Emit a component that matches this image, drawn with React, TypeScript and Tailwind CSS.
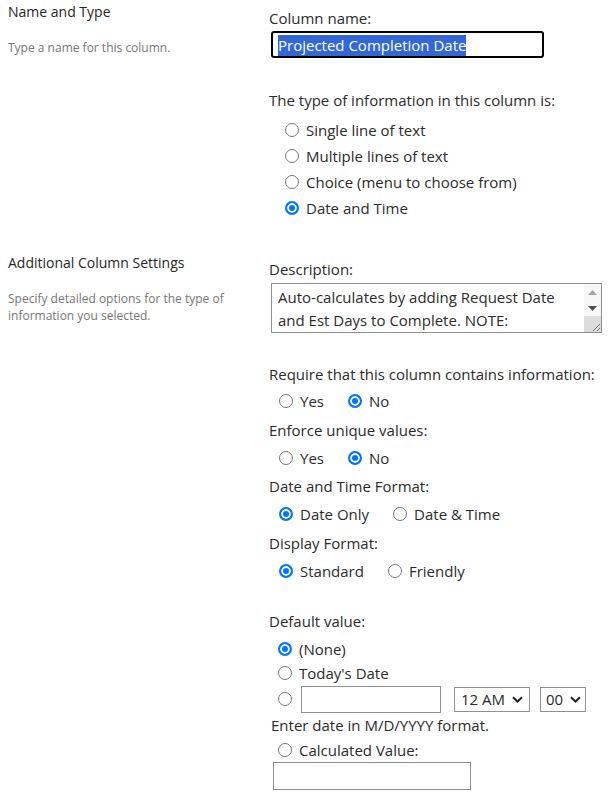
import React from "react";

const font = { fontFamily: '"Open Sans", "Noto Sans", sans-serif' };

const radioCls =
  "h-[14px] w-[14px] shrink-0 appearance-none rounded-full border border-[#767676] bg-white checked:border-2 checked:border-[#0075ff] checked:bg-[#0075ff] checked:shadow-[inset_0_0_0_2px_white]";

function Radio({ name, checked, label }: { name: string; checked?: boolean; label: string }) {
  return (
    <label className="flex items-center gap-[7px]">
      <input type="radio" name={name} defaultChecked={checked} className={radioCls} />
      <span>{label}</span>
    </label>
  );
}

function Chevron() {
  return (
    <svg width="11" height="7" viewBox="0 0 11 7" className="ml-[7px]">
      <path d="M1 1.2 L5.5 5.5 L10 1.2" fill="none" stroke="#222" strokeWidth="2" />
    </svg>
  );
}

function SectionHead({ title, desc }: { title: string; desc: string }) {
  return (
    <div className="w-[261px] shrink-0 pl-2 pr-6">
      <div className="text-[14px] leading-[20px] text-[#262626]">{title}</div>
      <div className="mt-[17px] text-[12px] leading-[17px] text-[#767676]">{desc}</div>
    </div>
  );
}

export default function App() {
  return (
    <div className="h-[797px] w-[613px] overflow-hidden bg-white text-[15px] text-[#2b2b2b]" style={font}>
      {/* Name and Type */}
      <div className="flex pt-[2px]">
        <SectionHead title="Name and Type" desc="Type a name for this column." />
        <div className="flex flex-col pl-2 pt-[6px]">
          <div className="leading-[20px]">Column name:</div>
          <div className="ml-[2px] mt-[3px] flex h-[27px] w-[273px] items-center rounded-[3px] border-2 border-black pl-[5px] pt-[2px]">
            <span className="bg-[#3367d6] leading-[21px] text-white">Projected Completion Date</span>
          </div>
          <div className="mt-[32px] leading-[20px]">The type of information in this column is:</div>
          <div className="ml-[16px] mt-[7px] flex flex-col">
            <div className="flex h-[26px] items-center"><Radio name="type" label="Single line of text" /></div>
            <div className="flex h-[26px] items-center"><Radio name="type" label="Multiple lines of text" /></div>
            <div className="flex h-[26px] items-center"><Radio name="type" label="Choice (menu to choose from)" /></div>
            <div className="flex h-[26px] items-center"><Radio name="type" checked label="Date and Time" /></div>
          </div>
        </div>
      </div>

      {/* Additional Column Settings */}
      <div className="mt-[32px] flex">
        <SectionHead
          title="Additional Column Settings"
          desc="Specify detailed options for the type of information you selected."
        />
        <div className="flex flex-col pl-2 pt-[6px]">
          <div className="leading-[20px]">Description:</div>
          <div className="ml-[2px] mt-[4px] flex h-[50px] w-[331px] border border-[#8f8f8f]">
            <textarea
              readOnly
              className="flex-1 resize-none overflow-hidden pl-[6px] pt-[2px] leading-[23px] outline-none"
              defaultValue={"Auto-calculates by adding Request Date and Est Days to Complete. NOTE:"}
            />
            <div className="flex w-[17px] flex-col bg-[#f7f7f7]">
              <div className="flex h-[16px] items-center justify-center">
                <svg width="9" height="5" viewBox="0 0 9 5"><path d="M0 5 L4.5 0 L9 5 Z" fill="#a3a3a3" /></svg>
              </div>
              <div className="flex h-[16px] items-center justify-center">
                <svg width="9" height="5" viewBox="0 0 9 5"><path d="M0 0 L4.5 5 L9 0 Z" fill="#505050" /></svg>
              </div>
              <div className="flex flex-1 items-end justify-end bg-[#dcdcdc]">
                <svg width="10" height="10" viewBox="0 0 10 10">
                  <path d="M9 2 L2 9 M9 6 L6 9" stroke="#777" strokeWidth="1" />
                </svg>
              </div>
            </div>
          </div>

          <div className="mt-[31px] leading-[20px]">Require that this column contains information:</div>
          <div className="ml-[10px] mt-[3px] flex h-[28px] items-center gap-[24px]">
            <Radio name="req" label="Yes" />
            <Radio name="req" checked label="No" />
          </div>
          <div className="mt-[5px] leading-[20px]">Enforce unique values:</div>
          <div className="ml-[10px] mt-[4px] flex h-[28px] items-center gap-[24px]">
            <Radio name="uniq" label="Yes" />
            <Radio name="uniq" checked label="No" />
          </div>
          <div className="mt-[4px] leading-[20px]">Date and Time Format:</div>
          <div className="ml-[10px] mt-[4px] flex h-[28px] items-center gap-[24px]">
            <Radio name="dtf" checked label="Date Only" />
            <Radio name="dtf" label="Date & Time" />
          </div>
          <div className="mt-[5px] leading-[20px]">Display Format:</div>
          <div className="ml-[10px] mt-[4px] flex h-[28px] items-center gap-[24px]">
            <Radio name="disp" checked label="Standard" />
            <Radio name="disp" label="Friendly" />
          </div>

          <div className="mt-[26px] leading-[20px]">Default value:</div>
          <div className="ml-[9px] mt-[6px] flex flex-col">
            <div className="flex h-[24px] items-center"><Radio name="def" checked label="(None)" /></div>
            <div className="flex h-[24px] items-center"><Radio name="def" label="Today's Date" /></div>
            <div className="flex h-[28px] items-center">
              <input type="radio" name="def" className={radioCls} />
              <input type="text" className="ml-[9px] h-[27px] w-[140px] border border-[#8f8f8f]" />
              <div className="ml-[13px] flex h-[25px] w-[76px] items-center border border-[#8f8f8f] pl-[6px]">
                <span>12 AM</span>
                <Chevron />
              </div>
              <div className="ml-[10px] flex h-[25px] w-[46px] items-center border border-[#8f8f8f] pl-[5px]">
                <span>00</span>
                <Chevron />
              </div>
            </div>
          </div>
          <div className="ml-[2px] mt-[2px] leading-[20px]">Enter date in M/D/YYYY format.</div>
          <div className="ml-[9px] mt-[3px] flex h-[24px] items-center"><Radio name="def" label="Calculated Value:" /></div>
          <input type="text" className="ml-[4px] h-[28px] w-[198px] border border-[#8f8f8f]" />
        </div>
      </div>
    </div>
  );
}
